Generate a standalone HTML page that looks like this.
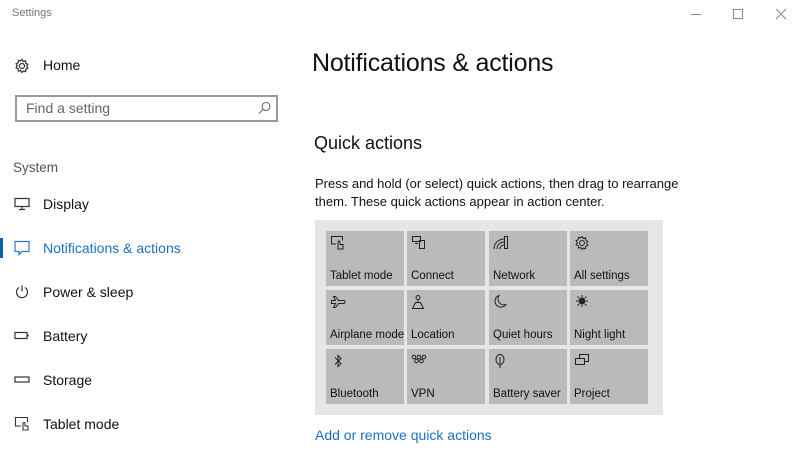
<!DOCTYPE html>
<html><head><meta charset="utf-8"><style>
*{margin:0;padding:0;box-sizing:border-box}
body{width:800px;height:454px;background:#fff;font-family:"Liberation Sans",sans-serif;color:#000;position:relative;overflow:hidden}
.a{position:absolute;white-space:nowrap}
.nav{font-size:14px;color:#111}
.ic{position:absolute}
.grid{position:absolute;left:315px;top:220px;width:348px;height:195px;background:#e6e6e6}
.t{position:absolute;width:78px;height:55px;background:#bababa;font-size:11.5px;color:#111}
.t span{position:absolute;left:4px;bottom:4px;white-space:nowrap}
.t svg{position:absolute;left:4px;top:4px}
</style></head><body>
<div class="a" style="left:12px;top:7px;font-size:11px;color:#777">Settings</div>
<svg class="ic" style="left:690px;top:8px" width="100" height="12" stroke="#888" fill="none" stroke-width="1"><path d="M1 6.5h10"/><rect x="43.5" y="1.5" width="9" height="9"/><path d="M86 1l10 10M96 1L86 11"/></svg>

<svg class="ic" style="left:14px;top:58px" width="16" height="16" fill="none" stroke="#333" stroke-width="1.2"><circle cx="8" cy="8" r="2.5"/><path d="M8 1.5l1.3 2 2.3-.6.2 2.4 2.1 1-1.2 2 1.2 2-2.1 1-.2 2.4-2.3-.6L8 14.5l-1.3-2-2.3.6-.2-2.4-2.1-1 1.2-2-1.2-2 2.1-1 .2-2.4 2.3.6z"/></svg>
<div class="a nav" style="left:43px;top:57px;font-size:14px">Home</div>
<div class="a" style="left:15px;top:95px;width:263px;height:27px;border:2px solid #999"></div>
<div class="a" style="left:26px;top:100px;font-size:14px;color:#666">Find a setting</div>
<svg class="ic" style="left:258px;top:101px" width="14" height="14" fill="none" stroke="#666" stroke-width="1.1"><circle cx="8" cy="5.5" r="4"/><path d="M5 8.5L1 12.5"/></svg>
<div class="a" style="left:13px;top:160px;font-size:13.5px;color:#555">System</div>

<svg class="ic" style="left:14px;top:197px" width="16" height="14" fill="none" stroke="#333" stroke-width="1.2"><rect x="1" y="1.5" width="14" height="8"/><path d="M8 9.5v3M5 12.5h6"/></svg>
<div class="a nav" style="left:43px;top:196px">Display</div>
<div class="a" style="left:0;top:238px;width:3px;height:20px;background:#0063b1"></div>
<svg class="ic" style="left:14px;top:240px" width="16" height="16" fill="none" stroke="#2b78c2" stroke-width="1.2"><path d="M1 1.5h14v10H8l-3 3v-3H1z"/></svg>
<div class="a nav" style="left:43px;top:240px;color:#1e6fc1">Notifications &amp; actions</div>
<svg class="ic" style="left:14px;top:284px" width="16" height="16" fill="none" stroke="#333" stroke-width="1.2"><path d="M8 1.5v6"/><path d="M5 3.5a5.5 5.5 0 1 0 6 0"/></svg>
<div class="a nav" style="left:43px;top:284px">Power &amp; sleep</div>
<svg class="ic" style="left:14px;top:331px" width="16" height="10" fill="none" stroke="#333" stroke-width="1.2"><rect x="1" y="1.5" width="12" height="6"/><path d="M14 3.5v2"/></svg>
<div class="a nav" style="left:43px;top:328px">Battery</div>
<svg class="ic" style="left:14px;top:375px" width="16" height="10" fill="none" stroke="#333" stroke-width="1.2"><rect x="1" y="2" width="14" height="5"/></svg>
<div class="a nav" style="left:43px;top:372px">Storage</div>
<svg class="ic" style="left:14px;top:416px" width="18" height="16" fill="none" stroke="#333" stroke-width="1.1"><path d="M7 10H1.5V1.5h12v5"/><path d="M9 14V7.5a1 1 0 0 1 2 0V10h3v4z"/></svg>
<div class="a nav" style="left:43px;top:416px">Tablet mode</div>

<div class="a" style="left:312px;top:49px;font-size:25px;color:#111;letter-spacing:-0.2px">Notifications &amp; actions</div>
<div class="a" style="left:314px;top:133px;font-size:18px;color:#111">Quick actions</div>
<div class="a" style="left:315px;top:175px;font-size:13px;line-height:18px;color:#111">Press and hold (or select) quick actions, then drag to rearrange<br>them. These quick actions appear in action center.</div>

<div class="grid"></div>
<div class="t" style="left:326px;top:231px"><svg width="16" height="16" fill="none" stroke="#222"><path d="M6 9H1.5V1.5h11v4"/><path d="M8 14V7a1 1 0 0 1 2 0v2.5h3V14z"/></svg><span>Tablet mode</span></div>
<div class="t" style="left:407px;top:231px"><svg width="16" height="16" fill="none" stroke="#222"><path d="M1.5 1.5h8v5h-8zM4 8.5h3"/><rect x="8.5" y="5.5" width="5" height="8"/></svg><span>Connect</span></div>
<div class="t" style="left:489px;top:231px"><svg width="16" height="16" fill="none" stroke="#222"><path d="M1 14a10 10 0 0 1 10-10M4 14a7 7 0 0 1 7-7M7 14a4 4 0 0 1 4-4"/><rect x="11.5" y="1.5" width="3" height="12"/></svg><span>Network</span></div>
<div class="t" style="left:570px;top:231px"><svg width="16" height="16" fill="none" stroke="#222"><circle cx="8" cy="8" r="2.5"/><path d="M8 1.5l1.3 2 2.3-.6.2 2.4 2.1 1-1.2 2 1.2 2-2.1 1-.2 2.4-2.3-.6L8 14.5l-1.3-2-2.3.6-.2-2.4-2.1-1 1.2-2-1.2-2 2.1-1 .2-2.4 2.3.6z"/></svg><span>All settings</span></div>
<div class="t" style="left:326px;top:290px"><svg width="16" height="16" fill="none" stroke="#222"><path d="M1.5 6.5h4l-2-4h2l3 4h5a1.5 1.5 0 0 1 0 3h-5l-3 4h-2l2-4h-4z"/></svg><span>Airplane mode</span></div>
<div class="t" style="left:407px;top:290px"><svg width="16" height="16" fill="none" stroke="#222"><circle cx="7" cy="3.5" r="2"/><path d="M7 5.5v3M1.5 14.5l3-6h5l3 6z"/></svg><span>Location</span></div>
<div class="t" style="left:489px;top:290px"><svg width="16" height="16" fill="none" stroke="#222"><path d="M6 1.5a6 6 0 1 0 7 9a6 6 0 0 1-7-9z"/></svg><span>Quiet hours</span></div>
<div class="t" style="left:570px;top:290px"><svg width="16" height="16" fill="none" stroke="#222"><circle cx="8" cy="7" r="3" fill="#222"/><path d="M8 1v2M8 11v2M2 7h2M12 7h2M3.5 2.5l1.5 1.5M11 10l1.5 1.5M12.5 2.5L11 4M5 10l-1.5 1.5"/></svg><span>Night light</span></div>
<div class="t" style="left:326px;top:349px"><svg width="16" height="16" fill="none" stroke="#222"><path d="M5 4.5l6 6-3 3v-11l3 3-6 6"/></svg><span>Bluetooth</span></div>
<div class="t" style="left:407px;top:349px"><svg width="18" height="16" fill="none" stroke="#222"><circle cx="3" cy="4" r="1.8"/><circle cx="8" cy="4" r="1.8"/><circle cx="13" cy="4" r="1.8"/><circle cx="5.5" cy="8" r="1.8"/><circle cx="10.5" cy="8" r="1.8"/></svg><span>VPN</span></div>
<div class="t" style="left:489px;top:349px"><svg width="16" height="16" fill="none" stroke="#222"><path d="M7 1.5a4 5 0 0 1 0 10a4 5 0 0 1 0-10zM7 4v11"/></svg><span>Battery saver</span></div>
<div class="t" style="left:570px;top:349px"><svg width="16" height="16" fill="none" stroke="#222"><rect x="5.5" y="1.5" width="9" height="7"/><rect x="1.5" y="5.5" width="9" height="6" fill="#bababa"/></svg><span>Project</span></div>

<div class="a" style="left:315px;top:427px;font-size:14px;color:#1e6fc1">Add or remove quick actions</div>
</body></html>
